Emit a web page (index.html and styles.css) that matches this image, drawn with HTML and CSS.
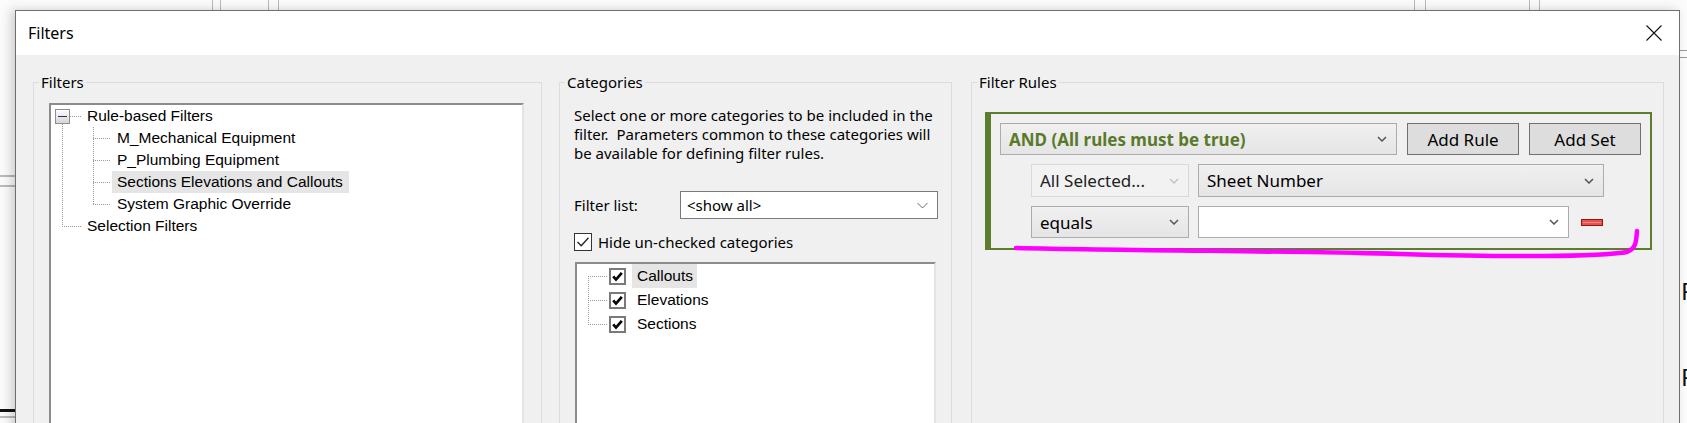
FILE: index.html
```html
<!DOCTYPE html>
<html lang="en">
<head>
<meta charset="UTF-8">
<title>Filters</title>
<link rel="stylesheet" href="styles.css">
</head>
<body>
<div class="desk">
  <!-- bits of the windows behind the dialog -->
  <div class="behind">
    <i class="vl" style="left:212px"></i><i class="vl" style="left:220px"></i>
    <i class="vl" style="left:268px"></i><i class="vl" style="left:278px"></i>
    <i class="vl" style="left:1414px"></i><i class="vl" style="left:1425px"></i>
    <i class="vl" style="left:1529px"></i><i class="vl" style="left:1539px"></i>
    <i class="hl" style="top:175px"></i><i class="hl" style="top:185px"></i>
    <i class="hl dark" style="top:409px"></i><i class="hl" style="top:416px"></i>
    <i class="hr" style="top:50px"></i><i class="hr" style="top:57px"></i>
    <span class="r" style="top:274px">R</span><span class="r" style="top:360px">R</span>
  </div>

  <div class="dialog">
    <div class="titlebar">
      <span class="title">Filters</span>
      <svg class="close" width="16" height="16" viewBox="0 0 16 16"><path d="M0.5 0.5 15.5 15.5M15.5 0.5 0.5 15.5" stroke="#111" stroke-width="1.1" fill="none"/></svg>
    </div>

    <div class="panels">
      <!-- ===== Filters ===== -->
      <fieldset class="group g-filters">
        <legend>Filters</legend>
        <div class="tree">
          <svg class="links" width="120" height="130">
            <g stroke="#9a9a9a" stroke-dasharray="1 1" fill="none" shape-rendering="crispEdges">
              <path d="M11.5 19V122M19 11.5H31M11 121.5H31"/>
              <path d="M42.5 22V100M42 33.5H60M42 55.5H60M42 77.5H60M42 99.5H60"/>
            </g>
          </svg>
          <div class="node"><span class="exp"></span><span class="lbl root-lbl">Rule-based Filters</span></div>
          <div class="node"><span class="lbl kid">M_Mechanical Equipment</span></div>
          <div class="node"><span class="lbl kid">P_Plumbing Equipment</span></div>
          <div class="node"><span class="lbl kid sel">Sections Elevations and Callouts</span></div>
          <div class="node"><span class="lbl kid">System Graphic Override</span></div>
          <div class="node"><span class="lbl top">Selection Filters</span></div>
        </div>
      </fieldset>

      <!-- ===== Categories ===== -->
      <fieldset class="group g-cats">
        <legend>Categories</legend>
        <div class="cats-body">
          <p class="desc">Select one or more categories to be included in the<br>filter.&nbsp; Parameters common to these categories will<br>be available for defining filter rules.</p>
          <div class="list-row">
            <span class="list-lbl">Filter list:</span>
            <div class="drop">
              <span>&lt;show all&gt;</span>
              <svg width="11" height="7" viewBox="0 0 11 7"><path d="M0.5 1 5.5 6 10.5 1" stroke="#6a6a6a" fill="none"/></svg>
            </div>
          </div>
          <label class="hide-row">
            <svg width="18" height="18" viewBox="0 0 18 18"><rect x="0.5" y="0.5" width="17" height="17" fill="#fff" stroke="#333"/><path d="M3.5 9 7.2 12.8 14.5 4.8" stroke="#222" stroke-width="1.3" fill="none"/></svg>
            <span>Hide un-checked categories</span>
          </label>
          <div class="catlist">
            <svg class="links" width="40" height="70">
              <path d="M11.5 12V61M11 12.5H30M11 36.5H30M11 60.5H30" stroke="#9a9a9a" stroke-dasharray="1 1" fill="none" shape-rendering="crispEdges"/>
            </svg>
            <div class="cat"><svg class="cb" width="17" height="17" viewBox="0 0 17 17"><rect x="1" y="1" width="15" height="15" fill="#fff" stroke="#7a7a7a" stroke-width="2"/><path d="M4.2 8.3 7 11.6 12.8 4.8" stroke="#000" stroke-width="2.6" fill="none"/></svg><span class="lbl sel">Callouts</span></div>
            <div class="cat"><svg class="cb" width="17" height="17" viewBox="0 0 17 17"><rect x="1" y="1" width="15" height="15" fill="#fff" stroke="#7a7a7a" stroke-width="2"/><path d="M4.2 8.3 7 11.6 12.8 4.8" stroke="#000" stroke-width="2.6" fill="none"/></svg><span class="lbl">Elevations</span></div>
            <div class="cat"><svg class="cb" width="17" height="17" viewBox="0 0 17 17"><rect x="1" y="1" width="15" height="15" fill="#fff" stroke="#7a7a7a" stroke-width="2"/><path d="M4.2 8.3 7 11.6 12.8 4.8" stroke="#000" stroke-width="2.6" fill="none"/></svg><span class="lbl">Sections</span></div>
          </div>
        </div>
      </fieldset>

      <!-- ===== Filter Rules ===== -->
      <fieldset class="group g-rules">
        <legend>Filter Rules</legend>
        <div class="ruleset">
          <div class="rrow">
            <div class="combo c-and"><b>AND (All rules must be true)</b><svg class="chev" width="10" height="6" viewBox="0 0 10 6"><path d="M1 1 5 5 9 1" stroke="#555" stroke-width="1.5" fill="none"/></svg></div>
            <button class="btn">Add Rule</button>
            <button class="btn">Add Set</button>
          </div>
          <div class="rrow sub">
            <div class="combo c-small off"><span>All Selected...</span><svg class="chev" width="10" height="6" viewBox="0 0 10 6"><path d="M1 1 5 5 9 1" stroke="#c4c4c4" stroke-width="1.5" fill="none"/></svg></div>
            <div class="combo c-param"><span>Sheet Number</span><svg class="chev" width="10" height="6" viewBox="0 0 10 6"><path d="M1 1 5 5 9 1" stroke="#555" stroke-width="1.5" fill="none"/></svg></div>
          </div>
          <div class="rrow sub">
            <div class="combo c-small"><span>equals</span><svg class="chev" width="10" height="6" viewBox="0 0 10 6"><path d="M1 1 5 5 9 1" stroke="#555" stroke-width="1.5" fill="none"/></svg></div>
            <div class="combo c-value"><span></span><svg class="chev" width="10" height="6" viewBox="0 0 10 6"><path d="M1 1 5 5 9 1" stroke="#555" stroke-width="1.5" fill="none"/></svg></div>
            <svg class="minus" width="22" height="7" viewBox="0 0 22 7"><rect x="0.5" y="0.5" width="21" height="6" fill="#e4534f" stroke="#9a1410"/><path d="M2 3.5H20" stroke="#f08784"/></svg>
          </div>
        </div>
      </fieldset>
    </div>
  </div>

  <!-- pen mark drawn on the screenshot -->
  <svg class="ink" width="1687" height="423">
    <path d="M1016 248C1150 251 1300 251 1400 254S1600 257 1627 252C1637 248 1636 240 1637 231" stroke="#ff00ff" stroke-width="4.5" stroke-linecap="round" fill="none"/>
  </svg>
</div>
</body>
</html>
```

FILE: styles.css
```css
/* ---------- reset ---------- */
*
{
  box-sizing:border-box;
}
body
{
  margin:0;
  background:#fbfbfb;
  font-family:"Noto Sans",sans-serif;
  color:#000;
  overflow:hidden;
}
.desk
{
  position:relative;
  height:423px;
  padding:10px 0 0 15px;
  overflow:hidden;
}

/* ===== windows behind ===== */
.behind i
{
  position:absolute;
  background:#b9b9b9;
}
.behind .vl{top:0;width:1px;height:10px;}
.behind .hl{left:0;width:15px;height:2px;}
.behind .hl.dark{background:#111;height:3px;}
.behind .hr{left:1680px;width:7px;height:1px;background:#999;}
.behind .r
{
  position:absolute;
  left:1681px;
  font:24px "Noto Sans",sans-serif;
  color:#111;
}

/* ===== dialog ===== */
.dialog
{
  position:relative;
  width:1665px;
  height:440px;
  border:1px solid #6f6f6f;
  background:#f0f0f0;
  box-shadow:-4px 0 10px rgba(0,0,0,.18);
}
.titlebar
{
  height:44px;
  background:#fff;
  display:flex;
  align-items:center;
  justify-content:space-between;
  padding:0 17px 0 12px;
}
.title{font-size:16px;}
.close{display:block;}

.panels
{
  display:flex;
  padding:17px 15px 0 17px;
}
.group
{
  margin:0;
  padding:0;
  min-width:0;
  height:380px;
  border:1px solid #dcdcdc;
}
.group legend
{
  margin-left:5px;
  padding:0 2px;
  font-size:15px;
  line-height:20px;
}
.g-filters{width:509px;}
.g-cats{width:393px;margin-left:17px;}
.g-rules{width:693px;margin-left:19px;}

/* ===== tree ===== */
.tree
{
  position:relative;
  width:475px;
  height:330px;
  margin:11px 0 0 15px;
  background:#fff;
  border:2px solid;
  border-color:#8c8c8c #e3e3e3 #e3e3e3 #8c8c8c;
  font-family:"Liberation Sans",Arial,sans-serif;
  font-size:15.5px;
}
.links
{
  position:absolute;
  top:0;
  left:0;
}
.node
{
  display:flex;
  align-items:center;
  height:22px;
}
.lbl
{
  padding:0 6px 0 5px;
  line-height:22px;
  white-space:nowrap;
}
.lbl.sel{background:#e5e5e5;}
.exp
{
  width:15px;
  height:15px;
  margin-left:4px;
  border:1px solid #8e8e8e;
  background:linear-gradient(#fdfdfd,#d6d6d6);
  position:relative;
}
.exp::after
{
  content:"";
  position:absolute;
  left:2px;
  right:2px;
  top:6px;
  height:1px;
  background:#1d3670;
}
.root-lbl{margin-left:12px;}
.lbl.kid{margin-left:61px;}
.lbl.top{margin-left:31px;}

/* ===== categories ===== */
.cats-body{padding-left:14px;}
.desc
{
  margin:14px 0 0;
  font-size:15px;
  line-height:19px;
}
.list-row
{
  display:flex;
  align-items:center;
  margin-top:28px;
  font-size:15px;
}
.list-lbl{width:106px;}
.drop
{
  width:258px;
  height:28px;
  display:flex;
  align-items:center;
  justify-content:space-between;
  padding:0 9px 0 6px;
  background:#fff;
  border:1px solid #7a7a7a;
}
.drop svg{display:block;}
.hide-row
{
  display:flex;
  align-items:center;
  gap:6px;
  height:20px;
  margin-top:13px;
  font-size:15px;
}
.hide-row svg{display:block;}
.catlist
{
  position:relative;
  width:361px;
  height:170px;
  margin:10px 0 0 1px;
  background:#fff;
  border:2px solid;
  border-color:#8c8c8c #e3e3e3 #e3e3e3 #8c8c8c;
  font-family:"Liberation Sans",Arial,sans-serif;
  font-size:15.5px;
}
.cat
{
  display:flex;
  align-items:center;
  height:24px;
  padding-left:32px;
}
.cb{display:block;}
.cat .lbl
{
  margin-left:6px;
  padding:0 4px 0 5px;
  line-height:24px;
}

/* ===== filter rules ===== */
.ruleset
{
  width:667px;
  margin:20px 0 0 13px;
  padding:9px 8px 10px 9px;
  border:2px solid #5b7d2c;
  border-left-width:6px;
  font-size:17px;
}
.rrow
{
  display:flex;
  align-items:center;
}
.rrow + .rrow{margin-top:9px;}
.rrow.sub{padding-left:31px;}
.combo
{
  display:flex;
  align-items:center;
  justify-content:space-between;
  height:32px;
  padding:0 9px 0 8px;
  border:1px solid #acacac;
  background:linear-gradient(#f0f0f0,#e5e5e5);
  white-space:nowrap;
}
.chev{display:block;flex:none;}
.c-and{width:397px;}
.c-and b{color:#5a7a2a;}
.c-small{width:158px;}
.c-param{width:406px;height:33px;margin-left:9px;}
.c-value{width:371px;margin-left:9px;background:#fff;border-color:#abadb3;}
.off
{
  height:33px;
  background:#f2f2f2;
  border-color:#d9d9d9;
  color:#222;
}
.btn
{
  width:112px;
  height:32px;
  margin-left:10px;
  border:1px solid #707070;
  background:#dddddd;
  font:17px "Noto Sans",sans-serif;
  color:#000;
  padding:0;
}
.minus{display:block;margin-left:12px;}

/* ===== ink ===== */
.ink
{
  position:absolute;
  top:0;
  left:0;
  pointer-events:none;
}
```
